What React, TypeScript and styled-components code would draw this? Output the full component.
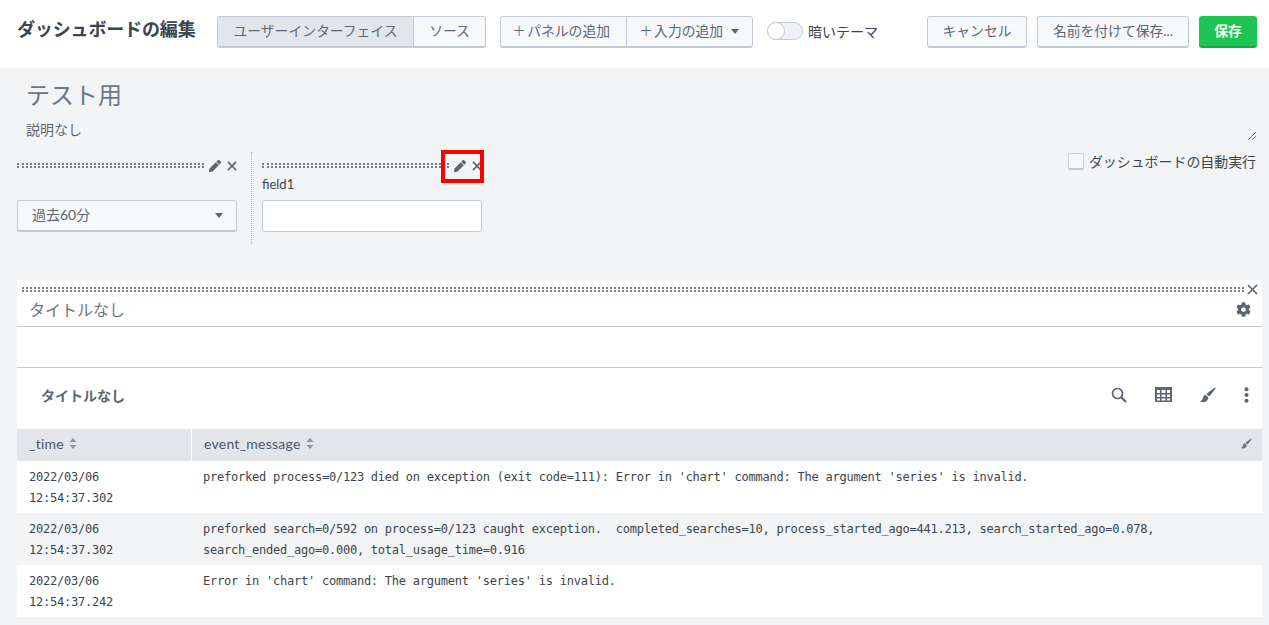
import React from "react";
import styled, { createGlobalStyle } from "styled-components";
import { FaPen, FaCog } from "react-icons/fa";

const Global = createGlobalStyle`
  html, body { margin: 0; padding: 0; background: #f2f4f5; }
  body { width: 1269px; height: 625px; overflow: hidden; font-family: Lato, "Noto Sans CJK JP", sans-serif; color: #3c444d; }
`;

const Page = styled.div`
  width: 1269px;
  height: 625px;
  overflow: hidden;
  display: flex;
  flex-direction: column;
`;

const Header = styled.header`
  height: 68px;
  flex: none;
  background: #fff;
  display: flex;
  align-items: flex-start;
  padding: 16px 12px 0 17px;
  box-sizing: border-box;
`;

const PageTitle = styled.h1`
  margin: 0;
  width: 200px;
  flex: none;
  font-size: 18px;
  line-height: 26px;
  font-weight: 700;
  color: #3c444d;
  letter-spacing: -0.15px;
  white-space: nowrap;
`;

const Group = styled.div<{ $ml?: number }>`
  display: flex;
  margin-left: ${(p) => p.$ml ?? 0}px;
`;

const Btn = styled.button<{ $w: number; $active?: boolean; $pos?: "l" | "r" | "s" }>`
  width: ${(p) => p.$w}px;
  height: 32px;
  box-sizing: border-box;
  padding: 0 0 3px;
  font: inherit;
  font-size: 13.8px;
  color: #5c6773;
  background: ${(p) => (p.$active ? "#e1e6eb" : "#f7f8fa")};
  border: 1px solid #c3cbd4;
  border-bottom-width: 2px;
  border-radius: ${(p) => (p.$pos === "l" ? "3px 0 0 3px" : p.$pos === "r" ? "0 3px 3px 0" : "3px")};
  ${(p) => (p.$pos === "r" ? "border-left: none;" : "")}
  white-space: nowrap;
  display: flex;
  align-items: center;
  justify-content: center;
  gap: 2px;
  flex: none;
`;

const AddBtn = styled(Btn)`
  padding-right: 4px;
`;

const SaveBtn = styled(Btn)`
  margin-left: 10px;
  background: #1cc451;
  border: none;
  border-bottom: 2px solid #17a844;
  color: #fff;
  font-weight: 700;
`;

const Plus = styled.span`
  font-size: 21px;
  font-weight: 300;
  line-height: 18px;
`;

const Caret = styled.span`
  width: 0;
  height: 0;
  margin-left: 6px;
  margin-top: 2px;
  border-left: 4px solid transparent;
  border-right: 4px solid transparent;
  border-top: 5px solid #5c6773;
`;

const SelectCaret = styled(Caret)`
  margin-left: auto;
`;

const ToggleWrap = styled.div`
  margin-left: 14px;
  height: 30px;
  display: flex;
  align-items: center;
  font-size: 14px;
  color: #3c444d;
  gap: 5px;
  width: 160px;
  flex: none;
  white-space: nowrap;
`;

const Toggle = styled.span`
  position: relative;
  width: 36px;
  height: 18px;
  box-sizing: border-box;
  border: 1px solid #c3cbd4;
  border-radius: 9px;
  background: #eef0f3;
  flex: none;
  &::before {
    content: "";
    position: absolute;
    left: -1px;
    top: -1px;
    width: 18px;
    height: 18px;
    box-sizing: border-box;
    border-radius: 50%;
    background: #fff;
    border: 1px solid #c3cbd4;
  }
`;

const Spacer = styled.div<{ $w: number }>`
  width: ${(p) => p.$w}px;
  flex: none;
`;

const Body = styled.main`
  flex: 1;
  background: #f2f4f5;
  display: flex;
  flex-direction: column;
  min-height: 0;
`;

const Intro = styled.div`
  height: 84px;
  flex: none;
  padding: 11px 12px 0 26px;
  box-sizing: border-box;
  position: relative;
`;

const DashTitle = styled.div`
  font-size: 24px;
  line-height: 32px;
  color: #6b7785;
`;

const DashDesc = styled.div`
  margin-top: 10px;
  font-size: 14px;
  line-height: 18px;
  color: #5c6773;
`;

const ResizeGrip = styled.svg`
  position: absolute;
  right: 13px;
  bottom: 12px;
  width: 8px;
  height: 8px;
`;

const InputRow = styled.div`
  height: 96px;
  flex: none;
  display: flex;
  padding-left: 17px;
`;

const InputCell = styled.div`
  position: relative;
  width: 220px;
  flex: none;
  padding-top: 6px;
  display: flex;
  flex-direction: column;
`;

const Divider = styled.div`
  width: 0;
  height: 92px;
  border-left: 1px dotted #aab2bc;
  margin: 0 10px 0 14px;
  flex: none;
`;

const DragRow = styled.div`
  display: flex;
  align-items: center;
  height: 14px;
`;

const Dots = styled.div`
  flex: 1;
  height: 1px;
  border-top: 2px dotted #77818d;
  border-bottom: 2px dotted #77818d;
`;

const EditIcons = styled.div`
  display: flex;
  align-items: center;
  gap: 6px;
  margin: 1px 0 0 5px;
  color: #5c6773;
  width: 28px;
  flex: none;
`;

const Field = styled.div`
  font-size: 13px;
  line-height: 18px;
  height: 18px;
  margin-top: 3px;
  color: #3c444d;
`;

const Select = styled.div`
  margin-top: 7px;
  height: 32px;
  box-sizing: border-box;
  border: 1px solid #c3cbd4;
  border-bottom-width: 2px;
  border-radius: 3px;
  background: #f7f8fa;
  padding: 0 13px 3px 14px;
  display: flex;
  align-items: center;
  font-size: 14px;
  color: #5c6773;
`;

const TextBox = styled.input`
  margin-top: 7px;
  height: 32px;
  width: 220px;
  box-sizing: border-box;
  border: 1px solid #c3cbd4;
  border-radius: 3px;
  background: #fff;
  padding: 0 8px;
`;

const Highlight = styled.div`
  position: absolute;
  left: 179px;
  top: -2px;
  width: 43px;
  height: 33px;
  box-sizing: border-box;
  border: 4px solid #fa0000;
`;

const AutoRun = styled.label`
  margin-left: auto;
  margin-right: 13px;
  height: 18px;
  display: flex;
  align-items: center;
  gap: 5px;
  font-size: 13.93px;
  color: #3c444d;
  white-space: nowrap;
`;

const Check = styled.span`
  width: 16px;
  height: 17px;
  box-sizing: border-box;
  border: 1px solid #c3cbd4;
  border-bottom-width: 2px;
  border-radius: 2px;
  background: #f7f8fa;
`;

const Panel = styled.section`
  margin: 32px 7px 0 17px;
  background: #fff;
  flex: none;
`;

const PanelDrag = styled.div`
  display: flex;
  align-items: center;
  height: 18px;
  padding: 0 4px 0 5px;
  color: #5c6773;
  gap: 3px;
`;

const PanelHead = styled.div`
  height: 28px;
  display: flex;
  align-items: flex-start;
  justify-content: space-between;
  padding: 0 11px 0 12px;
  border-bottom: 1px solid #c3cbd4;
  color: #6b7785;
  font-size: 16px;
  line-height: 24px;
`;

const CogSlot = styled.span`
  display: flex;
  margin-top: 4px;
  color: #5c6773;
`;

const Blank = styled.div`
  height: 40px;
  border-bottom: 1px solid #c3cbd4;
`;

const VizBar = styled.div`
  height: 61px;
  box-sizing: border-box;
  display: flex;
  align-items: center;
  padding: 0 13px 8px 24px;
  font-size: 14px;
  font-weight: 700;
  color: #5c6773;
`;

const VizTitle = styled.div`
  flex: 1;
`;

const VizTools = styled.div`
  display: flex;
  align-items: center;
  gap: 28px;
  color: #5c6773;
`;

const Table = styled.div`
  display: flex;
  flex-direction: column;
`;

const THead = styled.div`
  height: 32px;
  display: grid;
  grid-template-columns: 174px 1fr;
  column-gap: 1px;
  font-size: 14px;
  letter-spacing: 0.25px;
`;

const Th = styled.div`
  background: #e1e6eb;
  display: flex;
  align-items: center;
  padding: 0 0 3px 12px;
  gap: 5px;
  color: #4d5661;
`;

const EditCol = styled.span`
  margin-left: auto;
  margin-right: 10px;
  display: flex;
  color: #6b7785;
`;

const Row = styled.div<{ $alt?: boolean }>`
  height: 52px;
  display: grid;
  grid-template-columns: 174px 1fr;
  column-gap: 1px;
  background: ${(p) => (p.$alt ? "#f2f4f5" : "#fff")};
  font-family: "DejaVu Sans Mono", monospace;
  font-size: 12px;
  letter-spacing: -0.23px;
  line-height: 21px;
  color: #3c444d;
`;

const Td = styled.div`
  padding: 6px 12px 0 12px;
  white-space: pre-wrap;
`;

const MsgTd = styled(Td)`
  padding-left: 11px;
`;

const Sort = () => (
  <svg width="8" height="11" viewBox="0 0 8 11" fill="#8a94a0">
    <path d="M4 0 L7.5 4 H0.5 Z M4 11 L7.5 7 H0.5 Z" />
  </svg>
);

const Close = () => (
  <svg width="10" height="10" viewBox="0 0 11 11" stroke="currentColor" strokeWidth="1.8" fill="none">
    <path d="M1 1 L10 10 M10 1 L1 10" />
  </svg>
);

const PanelClose = () => (
  <svg width="11" height="11" viewBox="0 0 11 11" stroke="currentColor" strokeWidth="1.7" fill="none">
    <path d="M1 1 L10 10 M10 1 L1 10" />
  </svg>
);

const SearchIcon = () => (
  <svg width="16" height="16" viewBox="0 0 16 16" fill="none" stroke="#5c6773" strokeWidth="1.7">
    <circle cx="6.5" cy="6.5" r="5" />
    <path d="M10.2 10.2 L15 15" strokeWidth="2.2" />
  </svg>
);

const GridIcon = () => (
  <svg width="17" height="15" viewBox="0 0 17 15" fill="#5c6773">
    <path d="M0 0H17V15H0Z M2 3V6H5V3Z M6.5 3V6H10.5V3Z M12 3V6H15V3Z M2 7.5V10H5V7.5Z M6.5 7.5V10H10.5V7.5Z M12 7.5V10H15V7.5Z M2 11.5V13.5H5V11.5Z M6.5 11.5V13.5H10.5V11.5Z M12 11.5V13.5H15V11.5Z" fillRule="evenodd" />
  </svg>
);

const Brush = ({ size }: { size: number }) => (
  <svg width={size} height={size} viewBox="0 0 16 16" fill="currentColor">
    <path d="M15.8 0.2 C15.9 1.5 12.5 5.5 9.2 9.6 L6.4 7 C10 4 14.2 0.6 15.8 0.2 Z" />
    <path d="M5.6 7.8 C3.4 8 3 10.2 2.6 11.8 C2.2 13.2 1.2 14 0 14.6 C3 16 7.8 15.4 8.4 10.4 Z" />
  </svg>
);

const Kebab = () => (
  <svg width="5" height="16" viewBox="0 0 5 16" fill="#5c6773">
    <circle cx="2.5" cy="2.2" r="2" />
    <circle cx="2.5" cy="8" r="2" />
    <circle cx="2.5" cy="13.8" r="2" />
  </svg>
);

const rows = [
  { time: "2022/03/06\n12:54:37.302", msg: "preforked process=0/123 died on exception (exit code=111): Error in 'chart' command: The argument 'series' is invalid." },
  { alt: true, time: "2022/03/06\n12:54:37.302", msg: "preforked search=0/592 on process=0/123 caught exception.  completed_searches=10, process_started_ago=441.213, search_started_ago=0.078,\nsearch_ended_ago=0.000, total_usage_time=0.916" },
  { time: "2022/03/06\n12:54:37.242", msg: "Error in 'chart' command: The argument 'series' is invalid." },
];

export default function App() {
  return (
    <Page>
      <Global />
      <Header>
        <PageTitle>ダッシュボードの編集</PageTitle>
        <Group>
          <Btn $w={197} $active $pos="l">ユーザーインターフェイス</Btn>
          <Btn $w={72} $pos="r">ソース</Btn>
        </Group>
        <Group $ml={14}>
          <AddBtn $w={127} $pos="l"><Plus>+</Plus>パネルの追加</AddBtn>
          <Btn $w={126} $pos="r"><Plus>+</Plus>入力の追加<Caret /></Btn>
        </Group>
        <ToggleWrap>
          <Toggle />
          暗いテーマ
        </ToggleWrap>
        <Btn $w={100}>キャンセル</Btn>
        <Spacer $w={10} />
        <Btn $w={152}>名前を付けて保存...</Btn>
        <SaveBtn $w={58}>保存</SaveBtn>
      </Header>
      <Body>
        <Intro>
          <DashTitle>テスト用</DashTitle>
          <DashDesc>説明なし</DashDesc>
          <ResizeGrip viewBox="0 0 8 8" stroke="#555" strokeWidth="0.8">
            <path d="M0 8L8 0M4 8L8 4" />
          </ResizeGrip>
        </Intro>
        <InputRow>
          <InputCell>
            <DragRow>
              <Dots />
              <EditIcons>
                <FaPen size={12} />
                <Close />
              </EditIcons>
            </DragRow>
            <Field />
            <Select>
              過去60分
              <SelectCaret />
            </Select>
          </InputCell>
          <Divider />
          <InputCell>
            <DragRow>
              <Dots />
              <EditIcons>
                <FaPen size={12} />
                <Close />
              </EditIcons>
            </DragRow>
            <Field>field1</Field>
            <TextBox />
            <Highlight />
          </InputCell>
          <AutoRun>
            <Check />
            ダッシュボードの自動実行
          </AutoRun>
        </InputRow>
        <Panel>
          <PanelDrag>
            <Dots />
            <PanelClose />
          </PanelDrag>
          <PanelHead>
            タイトルなし
            <CogSlot><FaCog size={15} /></CogSlot>
          </PanelHead>
          <Blank />
          <VizBar>
            <VizTitle>タイトルなし</VizTitle>
            <VizTools>
              <SearchIcon />
              <GridIcon />
              <Brush size={16} />
              <Kebab />
            </VizTools>
          </VizBar>
          <Table>
            <THead>
              <Th>_time <Sort /></Th>
              <Th>
                event_message <Sort />
                <EditCol><Brush size={11} /></EditCol>
              </Th>
            </THead>
            {rows.map((r, i) => (
              <Row key={i} $alt={r.alt}>
                <Td>{r.time}</Td>
                <MsgTd>{r.msg}</MsgTd>
              </Row>
            ))}
          </Table>
        </Panel>
      </Body>
    </Page>
  );
}
